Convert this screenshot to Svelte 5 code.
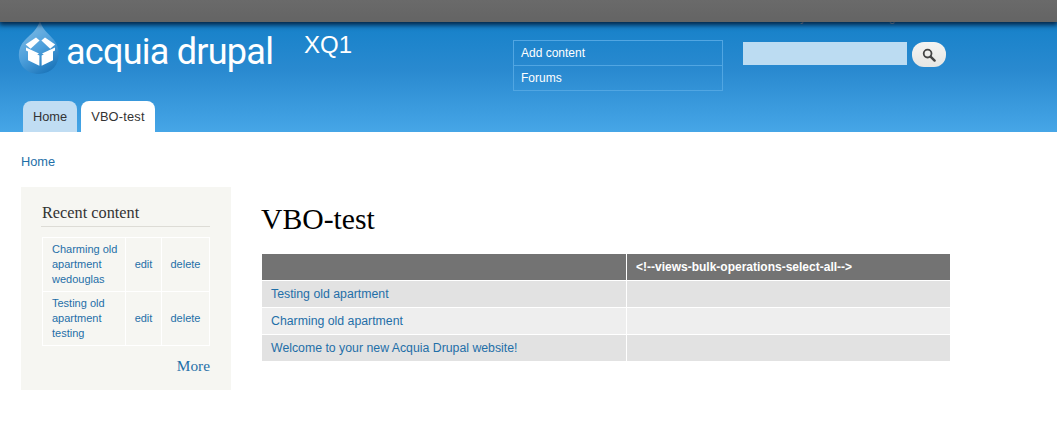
<script>
  const menu = ["Add content", "Forums"];
  const tabs = [{ label: "Home", active: false }, { label: "VBO-test", active: true }];
  const recent = [
    { title: "Charming old apartment", user: "wedouglas" },
    { title: "Testing old apartment", user: "testing" }
  ];
  const rows = ["Testing old apartment", "Charming old apartment", "Welcome to your new Acquia Drupal website!"];
</script>

<div class="topbar"></div>

<header class="head">
  <div class="user-links">My account<span class="gap"></span>Log out</div>
  <div class="head-row">
    <a class="logo" href="#home">
      <svg class="drop" viewBox="0 0 46 56" width="46" height="56" aria-hidden="true">
        <defs>
          <linearGradient id="dropFill" x1="0.2" y1="0" x2="0.7" y2="1">
            <stop offset="0" stop-color="#86bfe6" />
            <stop offset="0.55" stop-color="#4d9fdb" />
            <stop offset="1" stop-color="#1b75ba" />
          </linearGradient>
        </defs>
        <path d="M24 0C25 8 32 13 38 20C47 31 44 53 23 54C3 54 -3 32 9 20C15 14 22 9 24 0Z" fill="url(#dropFill)" />
        <g fill="#fff" transform="translate(-16 -20)">
          <path d="M28 50L39.4 55.4V65.8L28 60.2Z" />
          <path d="M41.6 55.4L53 50V60.2L41.6 65.8Z" />
          <path d="M25.6 44.6L36 37.6L39.6 40.4L30.6 48.8Z" />
          <path d="M41.4 40.4L45 37.4L55.2 44.6L50.2 48.8Z" />
          <path d="M26 47.4L29.8 49.2L39 53.6L36 55.6L26 50.4Z" />
          <path d="M55 47.4L42 53.6L45 55.6L55 50.4Z" />
        </g>
      </svg>
      <span class="wordmark">acquia drupal</span>
    </a>
    <div class="site-name">XQ1</div>
    <ul class="head-menu">
      {#each menu as item}
        <li><a href="#m">{item}</a></li>
      {/each}
    </ul>
    <form class="search">
      <input type="text" aria-label="Search" />
      <button type="button" aria-label="Search">
        <svg viewBox="0 0 14 14" width="14" height="14" fill="none" stroke="#444" aria-hidden="true">
          <circle cx="5.6" cy="5.6" r="3.9" stroke-width="1.8" />
          <path d="M8.6 8.6L12.6 12.6" stroke-width="2.4" stroke-linecap="round" />
        </svg>
      </button>
    </form>
  </div>
  <nav class="tabs">
    {#each tabs as t}
      <a href="#t" class="tab" class:active={t.active}>{t.label}</a>
    {/each}
  </nav>
</header>

<div class="crumb"><a href="#home">Home</a></div>

<div class="layout">
  <aside class="block">
    <h2>Recent content</h2>
    <table class="recent">
      <tbody>
        {#each recent as r}
          <tr>
            <td class="c1"><a href="#r">{r.title}</a><br /><a href="#u">{r.user}</a></td>
            <td class="c2"><a href="#e">edit</a></td>
            <td class="c3"><a href="#d">delete</a></td>
          </tr>
        {/each}
      </tbody>
    </table>
    <div class="more"><a href="#more">More</a></div>
  </aside>

  <main class="content">
    <h1>VBO-test</h1>
    <table class="views">
      <thead>
        <tr><th></th><th>&lt;!--views-bulk-operations-select-all--&gt;</th></tr>
      </thead>
      <tbody>
        {#each rows as row, i}
          <tr class:even={i % 2 === 1}>
            <td><a href="#n">{row}</a></td>
            <td></td>
          </tr>
        {/each}
      </tbody>
    </table>
  </main>
</div>

<style>
  :global(body) { margin: 0; background: #fff; font-family: "Liberation Sans", Arial, sans-serif; font-size: 12px; color: #333; overflow: hidden; }
  a { color: #1f6fa8; text-decoration: none; }

  .topbar { position: relative; z-index: 2; height: 22px; background: linear-gradient(#6a6a6a, #646464); box-shadow: 0 2px 5px 1px rgba(0, 25, 55, 0.9); }

  .head { position: relative; height: 110px; background: linear-gradient(#1681c9, #2a8ad0 45%, #46a6e7); display: flex; flex-direction: column; justify-content: space-between; }
  .user-links { position: absolute; z-index: 1; top: -12px; left: 790px; font-size: 12px; color: #ccc; white-space: nowrap; }
  .gap { display: inline-block; width: 24px; }
  .head-row { display: flex; align-items: flex-start; padding-left: 16px; }
  .logo { display: flex; align-items: flex-start; width: 262px; flex: none; }
  .drop { flex: none; margin-top: -2px; }
  .wordmark { font-family: Roboto, sans-serif; font-size: 36px; line-height: 46px; margin: 7px 0 0 4px; color: #fff; white-space: nowrap; letter-spacing: -0.75px; }
  .site-name { font-size: 24px; line-height: 28px; color: #fff; margin: 9px 0 0 26px; width: 209px; flex: none; }
  .head-menu { list-style: none; margin: 18px 0 0; padding: 0; width: 208px; flex: none; border: 1px solid #51a6e2; }
  .head-menu li { height: 24px; line-height: 24px; padding-left: 7px; }
  .head-menu li + li { border-top: 1px solid #51a6e2; }
  .head-menu a { color: #fff; }
  .search { display: flex; margin: 20px 0 0 20px; gap: 5px; }
  .search input { width: 164px; height: 23px; box-sizing: border-box; border: 0; padding: 0; background: #bcdcf2; display: block; }
  .search button { width: 34px; height: 25px; border: 0; padding: 0; border-radius: 12px; background: linear-gradient(#f4f4f2, #e6e6e4); display: flex; align-items: center; justify-content: center; }

  .tabs { display: flex; gap: 4px; padding-left: 23px; }
  .tab { display: block; height: 31px; line-height: 31px; padding: 0 10px; border-radius: 8px 8px 0 0; background: #c0ddf3; color: #333; font-size: 12.8px; }
  .tab.active { background: #fff; padding: 0 10px; letter-spacing: 0.2px; }

  .crumb { padding: 22px 21px 0; line-height: 15px; height: 33px; font-size: 12.8px; }

  .layout { display: flex; align-items: flex-start; padding-left: 21px; }
  .block { width: 210px; height: 203px; box-sizing: border-box; padding: 16px 21px 0 21px; background: #f6f6f2; flex: none; }
  .block h2 { margin: 0 0 0 -1px; padding: 0 0 4px 1px; font-family: "Liberation Serif", serif; font-weight: normal; font-size: 16.3px; line-height: 19px; color: #333; border-bottom: 1px solid #dddcd6; width: 168px; }
  .recent { border-collapse: collapse; width: 167px; margin-top: 10px; font-size: 11px; line-height: 15px; table-layout: fixed; }
  .recent td { border: 1px solid #fff; padding: 0; height: 54px; box-sizing: border-box; }
  .recent .c1 { width: 83px; padding: 0 4px 0 9px; }
  .recent .c2 { width: 36px; text-align: center; }
  .recent .c3 { width: 48px; text-align: center; }
  .more { margin-top: 11px; text-align: right; font-family: "Liberation Serif", serif; font-size: 15.3px; line-height: 17px; }

  .content { margin-left: 30px; flex: none; width: 690px; }
  .content h1 { margin: 16px 0 19px; font-family: "Liberation Serif", serif; font-weight: normal; font-size: 29.7px; line-height: 32px; color: #000; }
  .views { border-collapse: collapse; width: 688px; margin-left: 1px; table-layout: fixed; font-size: 12.3px; }
  .views th, .views td { height: 26px; padding: 0 9px; text-align: left; box-sizing: content-box; }
  .views th { background: #737373; color: #fff; font-weight: bold; font-size: 12px; border-right: 1px solid #fff; }
  .views th:first-child, .views td:first-child { width: 346px; }
  .views th:last-child, .views td:last-child { border-right: 0; }
  .views td { background: #e2e2e2; border-top: 1px solid #fff; border-right: 1px solid #fff; }
  .views tr.even td { background: #eeeeee; }
</style>
